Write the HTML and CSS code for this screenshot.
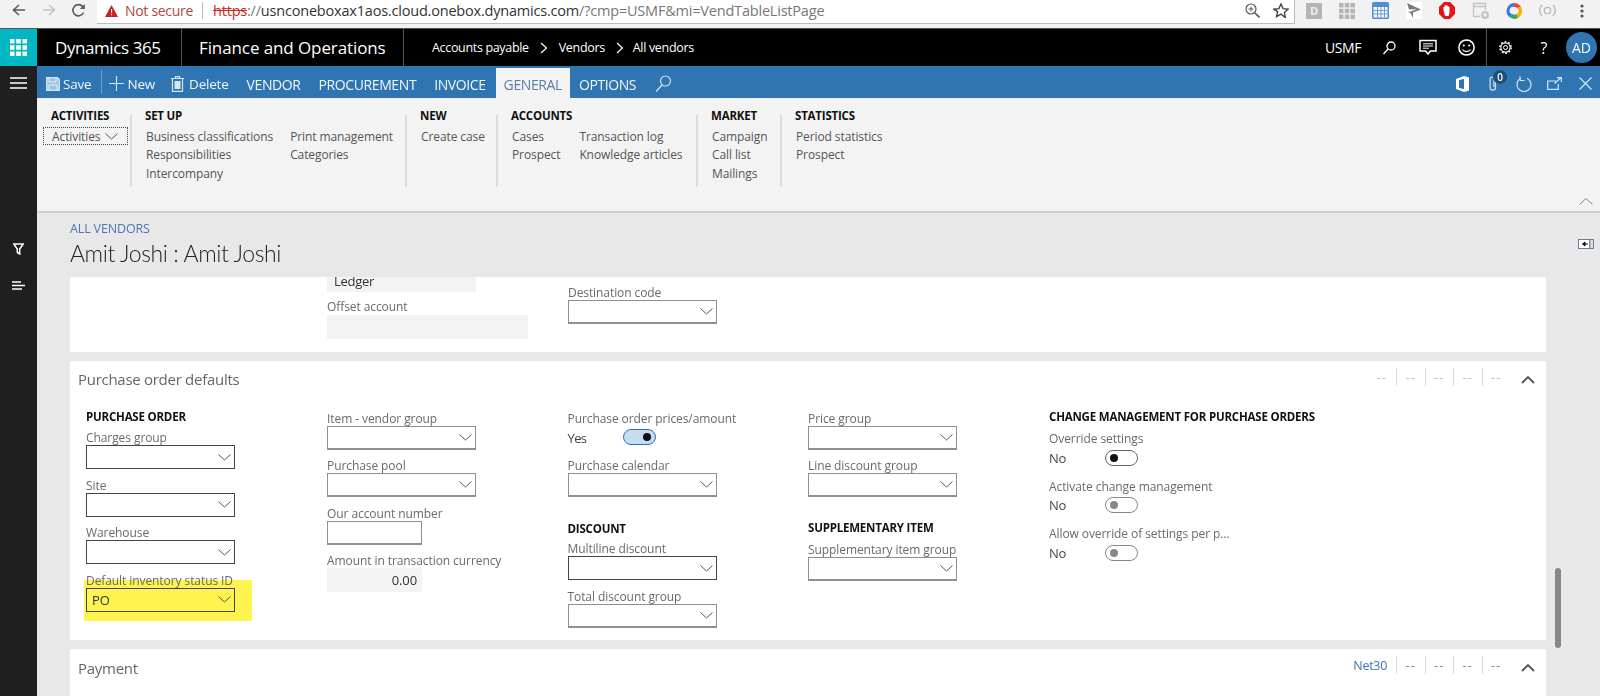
FILE: index.html
```
<!DOCTYPE html>
<html lang="en">
<head>
<meta charset="utf-8">
<title>All vendors</title>
<link rel="stylesheet" href="styles.css">
</head>
<body>
<div class="browser">
  <div class="nav-btns">
    <svg class="ic bk" width="14" height="14" viewBox="0 0 14 14"><path d="M13 7H2M7 2L1.5 7 7 12" fill="none" stroke="#5a5a5a" stroke-width="1.6"/></svg>
    <svg class="ic fw" width="14" height="14" viewBox="0 0 14 14"><path d="M1 7h11M7 2l5.500 5L7 12" fill="none" stroke="#c4c4c4" stroke-width="1.6"/></svg>
    <svg class="ic rl" width="15" height="15" viewBox="0 0 15 15"><path d="M12.600 9.500A5.600 5.600 0 1 1 11.600 3.400L13 5" fill="none" stroke="#5a5a5a" stroke-width="1.6"/><path d="M13.800 1v5h-5z" fill="#5a5a5a"/></svg>
  </div>
  <div class="urlbox">
    <svg width="13" height="12" viewBox="0 0 13 12"><path d="M6.500 0L13 12H0z" fill="#c5221f"/><path d="M6 4h1.100v4H6zM6 9h1.100v1.200H6z" fill="#fff"/></svg>
    <span class="notsecure">Not secure</span>
    <i class="urlsep"></i>
    <span class="url"><s class="https">https</s><span class="dim">://</span>usnconeboxax1aos.cloud.onebox.dynamics.com<span class="dim">/?cmp=USMF&amp;mi=VendTableListPage</span></span>
    <span class="grow"></span>
    <svg width="15" height="15" viewBox="0 0 15 15"><circle cx="6" cy="6" r="5" fill="none" stroke="#555" stroke-width="1.200"/><path d="M9.700 9.700L14.500 14.500" stroke="#555" stroke-width="1.600"/><path d="M3.500 6h5M6 3.500v5" stroke="#555"/></svg>
    <svg class="star" width="16" height="15" viewBox="0 0 16 15"><path d="M8 1l2.100 4.600 5 .6-3.700 3.400 1 5L8 11.200l-4.400 2.400 1-5L.9 6.200l5-.6z" fill="none" stroke="#444" stroke-width="1.400"/></svg>
  </div>
  <div class="exts">
    <span class="ext-d">D</span>
    <svg width="16" height="16" viewBox="0 0 16 16"><path d="M0 0h4.500v4.500H0zM5.700 0h4.500v4.500H5.700zM11.400 0H16v4.500h-4.600zM0 5.700h4.500v4.500H0zM5.700 5.700h4.500v4.500H5.700zM11.400 5.700H16v4.500h-4.600zM0 11.400h4.500V16H0zM5.700 11.400h4.500V16H5.700zM11.400 11.400H16V16h-4.600z" fill="#b5b5b5"/></svg>
    <svg width="17" height="17" viewBox="0 0 17 17"><rect width="17" height="17" rx="1.500" fill="#4f8fd8"/><rect x="1.500" y="5" width="14" height="10.500" fill="#f4f7fb"/><path d="M1.500 8.500h14M1.500 12h14M5.500 5v10.500M9 5v10.500M12.500 5v10.500" stroke="#6d9bd2"/></svg>
    <svg width="16" height="17" viewBox="0 0 16 17"><rect width="16" height="17" fill="#fff"/><path d="M1 1l14 6.500-8 3V16L4.500 11 1 9.500l3 .2L11 7 3 7.500z" fill="#7a7a7a"/></svg>
    <svg width="16" height="17" viewBox="0 0 16 17"><path d="M5 0h6l5 5v7l-5 5H5l-5-5V5z" fill="#e0161b"/><path d="M4.500 8V5h1V3.500h1V3h1v.5h1V4h1v1h1v6l-1 3H6z" fill="#fff"/></svg>
    <svg width="17" height="17" viewBox="0 0 17 17"><path d="M13.500 8V1.500h-12v13H8M1.500 4.500h12" fill="none" stroke="#c4c4c4" stroke-width="1.300"/><circle cx="13" cy="13" r="4" fill="#c4c4c4"/><path d="M13 11v4M11 13h4" stroke="#fff"/></svg>
    <svg width="16" height="16" viewBox="0 0 16 16"><path d="M8 0a8 8 0 0 1 7 4l-4 1A3.500 3.500 0 0 0 8 4z" fill="#e8453c"/><path d="M15 4a8 8 0 0 1-3 11l-1.500-4a3.500 3.500 0 0 0 .5-6z" fill="#f5b400"/><path d="M12 15a8 8 0 0 1-8-.5L6.500 11a3.500 3.500 0 0 0 4 0z" fill="#34a853"/><path d="M4 14.500A8 8 0 0 1 8 0v4a3.500 3.500 0 0 0-1.500 7z" fill="#3b78e7"/></svg>
    <svg width="17" height="13" viewBox="0 0 17 13"><circle cx="8.500" cy="6.500" r="3.200" fill="none" stroke="#bbb" stroke-width="1.300"/><path d="M3 1C0 4.500 0 8.500 3 12M14 1c3 3.500 3 7.500 0 11" fill="none" stroke="#bbb" stroke-width="1.300"/></svg>
    <svg class="dots" width="4" height="14" viewBox="0 0 4 14"><circle cx="2" cy="2" r="1.600" fill="#555"/><circle cx="2" cy="7" r="1.600" fill="#555"/><circle cx="2" cy="12" r="1.600" fill="#555"/></svg>
  </div>
</div>

<header class="topbar">
  <div class="waffle">
    <svg width="17" height="17" viewBox="0 0 17 17"><path d="M0 0h4.500v4.500H0zM6.200 0h4.600v4.500H6.200zM12.500 0H17v4.500h-4.500zM0 6.200h4.500v4.600H0zM6.200 6.200h4.600v4.600H6.200zM12.500 6.200H17v4.600h-4.500zM0 12.500h4.500V17H0zM6.200 12.500h4.600V17H6.200zM12.500 12.500H17V17h-4.500z" fill="#fff"/></svg>
  </div>
  <div class="brand d365">Dynamics 365</div>
  <div class="brand fno">Finance and Operations</div>
  <nav class="crumbs">
    <span>Accounts payable</span>
    <svg width="8" height="12" viewBox="0 0 8 12"><path d="M1 1l5.500 5L1 11" fill="none" stroke="#fff" stroke-width="1.200"/></svg>
    <span>Vendors</span>
    <svg width="8" height="12" viewBox="0 0 8 12"><path d="M1 1l5.500 5L1 11" fill="none" stroke="#fff" stroke-width="1.200"/></svg>
    <span>All vendors</span>
  </nav>
  <span class="grow"></span>
  <span class="company">USMF</span>
  <svg class="t-search" width="13" height="14" viewBox="0 0 13 14"><circle cx="8" cy="5" r="4" fill="none" stroke="#fff" stroke-width="1.300"/><path d="M5 8l-4.500 5" stroke="#fff" stroke-width="1.400"/></svg>
  <svg class="t-msg" width="18" height="17" viewBox="0 0 18 17"><path d="M1 1.500h16v10.500h-5.500L9 15l-2.500-3H1z" fill="none" stroke="#fff" stroke-width="1.500"/><path d="M4 4.800h10M4 7h10M4 9.200h6" stroke="#fff"/></svg>
  <svg class="t-smile" width="17" height="17" viewBox="0 0 17 17"><circle cx="8.500" cy="8.500" r="7.600" fill="none" stroke="#fff" stroke-width="1.500"/><circle cx="5.800" cy="6.500" r="1.100" fill="#fff"/><circle cx="11.200" cy="6.500" r="1.100" fill="#fff"/><path d="M4.500 10.500c2 2.700 6 2.700 8 0" fill="none" stroke="#fff" stroke-width="1.200"/></svg>
  <i class="t-sep"></i>
  <svg class="t-gear" width="13" height="13" viewBox="0 0 13 13"><circle cx="6.500" cy="6.500" r="2" fill="none" stroke="#fff"/><circle cx="6.500" cy="6.500" r="4.600" fill="none" stroke="#fff" stroke-width="1.100"/><circle cx="6.500" cy="6.500" r="5.700" fill="none" stroke="#fff" stroke-width="1.400" stroke-dasharray="1.800 1.800"/></svg>
  <span class="t-help">?</span>
  <span class="avatar">AD</span>
</header>

<div class="main">
  <aside class="rail">
    <svg class="r-menu" width="17" height="12" viewBox="0 0 17 12"><path d="M0 1h17M0 6h17M0 11h17" stroke="#fff" stroke-width="1.500"/></svg>
    <svg class="r-filter" width="11" height="12" viewBox="0 0 11 12"><path d="M.8 1h9.400L6.700 6v5L4.300 9.500V6z" fill="none" stroke="#fff" stroke-width="1.500"/></svg>
    <svg class="r-list" width="13" height="9" viewBox="0 0 13 9"><path d="M0 1h9M0 4.500h13M0 8h10" stroke="#fff" stroke-width="1.400"/></svg>
  </aside>

  <div class="work">
    <div class="toolbar">
      <svg class="b-save" width="14" height="14" viewBox="0 0 14 14"><path d="M.7.7h10.800l1.800 1.800v10.800H.7z" fill="#9cc3e4" stroke="#d7e6f3" stroke-width="1.300"/><path d="M3 1v4h7V1M3 13V8h8v5" fill="none" stroke="#e4eff8"/></svg>
      <span class="b-txt save">Save</span>
      <i class="b-sep"></i>
      <svg class="b-plus" width="15" height="15" viewBox="0 0 15 15"><path d="M0 7.500h15M7.500 0v15" stroke="#d7e6f3" stroke-width="1.100"/></svg>
      <span class="b-txt new">New</span>
      <svg class="b-trash" width="13" height="16" viewBox="0 0 13 16"><path d="M0 2.500h13M4.500 2.500V.7h4v1.800M1.500 2.500h10V15.300h-10z" fill="none" stroke="#d7e6f3" stroke-width="1.200"/><path d="M3.500 5h6v8h-6z" fill="#d7e6f3"/></svg>
      <span class="b-txt del">Delete</span>
      <span class="tab tab-vendor">VENDOR</span>
      <span class="tab">PROCUREMENT</span>
      <span class="tab">INVOICE</span>
      <span class="tab active">GENERAL</span>
      <span class="tab">OPTIONS</span>
      <svg class="b-find" width="17" height="17" viewBox="0 0 17 17"><circle cx="10.500" cy="6" r="5" fill="none" stroke="#d7e6f3" stroke-width="1.100"/><path d="M7 10l-6 6.500" stroke="#d7e6f3" stroke-width="1.200"/></svg>
      <span class="grow"></span>
      <svg class="b-office" width="13" height="16" viewBox="0 0 13 16"><path d="M8 0L0 3v10l8 3 5-1.500v-13z" fill="#fff"/><path d="M3 4l5-1v10l-5-1z" fill="#2e75b2"/></svg>
      <span class="clip">
        <svg width="8" height="15" viewBox="0 0 8 15"><path d="M6.500 3.500v8a2.700 2.700 0 0 1-5.400 0V3a1.900 1.900 0 0 1 3.800 0v8" fill="none" stroke="#cfe1f0" stroke-width="1.200"/></svg>
        <span class="badge">0</span>
      </span>
      <svg class="b-refresh" width="16" height="16" viewBox="0 0 16 16"><path d="M5 2.200a7 7 0 1 0 6 0" fill="none" stroke="#d7e6f3" stroke-width="1.200"/><path d="M4 0v4.500h4.500" fill="none" stroke="#d7e6f3"/></svg>
      <svg class="b-open" width="15" height="13" viewBox="0 0 15 13"><path d="M9 4H.7v8.300h10.600V7M7.500 6.500L14 .7M10 .6h4.400V5" fill="none" stroke="#d7e6f3" stroke-width="1.200"/></svg>
      <svg class="b-close" width="13" height="13" viewBox="0 0 13 13"><path d="M.5.5l12 12M12.500.5l-12 12" stroke="#d7e6f3" stroke-width="1.200"/></svg>
    </div>

    <div class="ribbon">
      <section class="rg rg-act">
        <h4>ACTIVITIES</h4>
        <div class="activities"><span>Activities</span>
          <svg width="13" height="7" viewBox="0 0 13 7"><path d="M.5.500l6 5.500 6-5.500" fill="none" stroke="#555"/></svg>
        </div>
      </section>
      <section class="rg rg-setup">
        <h4>SET UP</h4>
        <div class="rcols">
          <ul><li>Business classifications</li><li>Responsibilities</li><li>Intercompany</li></ul>
          <ul><li>Print management</li><li>Categories</li></ul>
        </div>
      </section>
      <section class="rg rg-new">
        <h4>NEW</h4>
        <div class="rcols"><ul><li>Create case</li></ul></div>
      </section>
      <section class="rg rg-acc">
        <h4>ACCOUNTS</h4>
        <div class="rcols">
          <ul><li>Cases</li><li>Prospect</li></ul>
          <ul><li>Transaction log</li><li>Knowledge articles</li></ul>
        </div>
      </section>
      <section class="rg rg-mkt">
        <h4>MARKET</h4>
        <div class="rcols"><ul><li>Campaign</li><li>Call list</li><li>Mailings</li></ul></div>
      </section>
      <section class="rg rg-stat">
        <h4>STATISTICS</h4>
        <div class="rcols"><ul><li>Period statistics</li><li>Prospect</li></ul></div>
      </section>
      <svg class="rib-collapse" width="14" height="8" viewBox="0 0 14 8"><path d="M.5 7.500l6.500-6 6.500 6" fill="none" stroke="#888"/></svg>
    </div>

    <div class="page">
      <div class="page-head">
        <div class="crumb-up">ALL VENDORS</div>
        <h1>Amit Joshi : Amit Joshi</h1>
      </div>
      <svg class="pane-toggle" width="16" height="10" viewBox="0 0 16 10"><rect x=".5" y=".5" width="15" height="9" fill="#fff" stroke="#6a7f9a"/><path d="M12 1v8" stroke="#222"/><path d="M12.500 1h2.500v8h-2.500z" fill="#ddd"/><path d="M5 5h5M7 3L4.500 5 7 7z" stroke="#111" fill="#111"/></svg>

      <div class="panels">
        <section class="panel p-top">
          <div class="p-top-col1">
            <div class="ledger"><span>Ledger</span></div>
            <label class="lbl offset-lbl">Offset account</label>
            <div class="ro-wide"></div>
          </div>
          <div class="p-top-col2">
            <label class="lbl">Destination code</label>
            <div class="dd"><svg class="chev" viewBox="0 0 13 7"><path d="M.5.500l6 5.500 6-5.500"/></svg></div>
          </div>
        </section>

        <section class="panel p-po">
          <header class="p-head">
            <h2>Purchase order defaults</h2>
            <div class="summary">
              <span class="sv">--</span><span class="sv">--</span><span class="sv">--</span><span class="sv">--</span><span class="sv">--</span>
            </div>
            <svg class="collapse" width="14" height="9" viewBox="0 0 14 9"><path d="M1 8l6-6 6 6" fill="none" stroke="#555" stroke-width="1.800"/></svg>
          </header>
          <div class="form">
            <div class="col c-first">
              <h3>PURCHASE ORDER</h3>
              <div class="f"><label class="lbl">Charges group</label><div class="dd dark"><svg class="chev" viewBox="0 0 13 7"><path d="M.5.500l6 5.500 6-5.500"/></svg></div></div>
              <div class="f"><label class="lbl">Site</label><div class="dd dark"><svg class="chev" viewBox="0 0 13 7"><path d="M.5.500l6 5.500 6-5.500"/></svg></div></div>
              <div class="f"><label class="lbl">Warehouse</label><div class="dd dark"><svg class="chev" viewBox="0 0 13 7"><path d="M.5.500l6 5.500 6-5.500"/></svg></div></div>
              <div class="f hl">
                <span class="marker"></span>
                <label class="lbl">Default inventory status ID</label>
                <div class="dd dark"><span class="ddv">PO</span><svg class="chev" viewBox="0 0 13 7"><path d="M.5.500l6 5.500 6-5.500"/></svg></div>
              </div>
            </div>
            <div class="col c-offset">
              <div class="f"><label class="lbl">Item - vendor group</label><div class="dd"><svg class="chev" viewBox="0 0 13 7"><path d="M.5.500l6 5.500 6-5.500"/></svg></div></div>
              <div class="f"><label class="lbl">Purchase pool</label><div class="dd"><svg class="chev" viewBox="0 0 13 7"><path d="M.5.500l6 5.500 6-5.500"/></svg></div></div>
              <div class="f"><label class="lbl">Our account number</label><div class="txt"></div></div>
              <div class="f"><label class="lbl">Amount in transaction currency</label><div class="ro-num">0.00</div></div>
            </div>
            <div class="col c-offset">
              <div class="f-t"><label class="lbl">Purchase order prices/amount</label><div class="tg-row"><span class="tv">Yes</span><span class="tg on"></span></div></div>
              <div class="f"><label class="lbl">Purchase calendar</label><div class="dd"><svg class="chev" viewBox="0 0 13 7"><path d="M.5.500l6 5.500 6-5.500"/></svg></div></div>
              <h3 class="h-mid h-disc">DISCOUNT</h3>
              <div class="f"><label class="lbl">Multiline discount</label><div class="dd dark"><svg class="chev" viewBox="0 0 13 7"><path d="M.5.500l6 5.500 6-5.500"/></svg></div></div>
              <div class="f"><label class="lbl">Total discount group</label><div class="dd"><svg class="chev" viewBox="0 0 13 7"><path d="M.5.500l6 5.500 6-5.500"/></svg></div></div>
            </div>
            <div class="col c-offset">
              <div class="f"><label class="lbl">Price group</label><div class="dd"><svg class="chev" viewBox="0 0 13 7"><path d="M.5.500l6 5.500 6-5.500"/></svg></div></div>
              <div class="f"><label class="lbl">Line discount group</label><div class="dd"><svg class="chev" viewBox="0 0 13 7"><path d="M.5.500l6 5.500 6-5.500"/></svg></div></div>
              <h3 class="h-mid">SUPPLEMENTARY ITEM</h3>
              <div class="f"><label class="lbl">Supplementary item group</label><div class="dd"><svg class="chev" viewBox="0 0 13 7"><path d="M.5.500l6 5.500 6-5.500"/></svg></div></div>
            </div>
            <div class="col">
              <h3>CHANGE MANAGEMENT FOR PURCHASE ORDERS</h3>
              <div class="f-n"><label class="lbl">Override settings</label><div class="tg-row no"><span class="tv">No</span><span class="tg off"></span></div></div>
              <div class="f-n"><label class="lbl">Activate change management</label><div class="tg-row no"><span class="tv">No</span><span class="tg off dis"></span></div></div>
              <div class="f-n"><label class="lbl">Allow override of settings per p...</label><div class="tg-row no"><span class="tv">No</span><span class="tg off dis"></span></div></div>
            </div>
          </div>
        </section>

        <section class="panel p-pay">
          <header class="p-head">
            <h2>Payment</h2>
            <div class="summary">
              <span class="sv link">Net30</span><span class="sv">--</span><span class="sv">--</span><span class="sv">--</span><span class="sv">--</span>
            </div>
            <svg class="collapse" width="14" height="9" viewBox="0 0 14 9"><path d="M1 8l6-6 6 6" fill="none" stroke="#555" stroke-width="1.800"/></svg>
          </header>
        </section>
      </div>
      <span class="scrollthumb"></span>
    </div>
  </div>
</div>
</body>
</html>
```
FILE: styles.css
```
* { box-sizing: border-box; }
html, body { margin: 0; height: 100%; overflow: hidden; }
body {
  width: 1600px; height: 696px;
  font-family: "Open Sans", "Noto Sans", sans-serif;
  font-size: 12px; color: #333;
  display: flex; flex-direction: column;
  background: #e8e8e8;
  filter: blur(.35px);
}
.grow { flex: 1; }
ul { list-style: none; margin: 0; padding: 0; }
h1, h2, h3, h4 { margin: 0; font-weight: normal; }

/* browser chrome */
.browser { height: 29px; flex: none; background: #f2f2f2; border-bottom: 1px solid #555; display: flex; }
.nav-btns { width: 97px; display: flex; align-items: flex-start; padding: 3px 0 0 12px; }
.nav-btns .fw { margin-left: 16px; }
.nav-btns .rl { margin-left: 15px; }
.urlbox { width: 1198px; height: 24px; background: #fff; border: 1px solid #bbb; border-top: 0; border-left: 0; display: flex; align-items: center; padding: 0 5px 2px 8px; }
.notsecure { margin-left: 7px; color: #b5483f; font-size: 14px; letter-spacing: -.3px; }
.urlsep { width: 1px; height: 17px; background: #bbb; margin: 0 10px 0 9px; }
.url { font-size: 14.5px; color: #333; letter-spacing: -.2px; white-space: nowrap; }
.https { color: #cc2a22; }
.dim { color: #777; }
.star { margin-left: 13px; }
.exts { flex: 1; display: flex; align-items: center; padding: 0 0 7px 11px; gap: 17px; }
.ext-d { width: 16px; height: 16px; background: #b5b5b5; color: #eee; font-size: 11px; font-weight: 700; display: flex; align-items: center; justify-content: center; }
.dots { margin-left: 7px; }

/* top bar */
.topbar { height: 37px; flex: none; background: #000; color: #fff; display: flex; align-items: center; }
.waffle { width: 37px; height: 37px; background: #00b7c3; display: flex; align-items: center; justify-content: center; }
.brand { height: 37px; display: flex; align-items: center; font-size: 17px; letter-spacing: -.42px; white-space: nowrap; border-right: 1px solid #555; }
.d365 { width: 145px; padding-left: 18px; }
.fno { width: 222px; padding-left: 17px; letter-spacing: -.1px; }
.crumbs { display: flex; align-items: center; padding-left: 28px; font-size: 12.5px; letter-spacing: -.33px; white-space: nowrap; }
.crumbs svg { margin: 0 11px; }
.crumbs svg:last-of-type { margin: 0 9px 0 11px; }
.company { font-size: 14px; letter-spacing: -.4px; margin-right: 22px; }
.t-search { margin-right: 23px; }
.t-msg { margin-right: 21px; }
.t-smile { margin-right: 11px; }
.t-sep { width: 1px; height: 37px; background: #555; }
.t-gear { margin-left: 12px; margin-right: 27px; }
.t-help { font-size: 16px; margin-right: 17px; width: 10px; text-align: center; }
.avatar { width: 31px; height: 31px; border-radius: 50%; background: #2e75b2; display: flex; align-items: center; justify-content: center; font-size: 14px; margin-right: 3px; }

/* body frame */
.main { flex: 1; display: flex; min-height: 0; }
.rail { width: 37px; flex: none; background: #1f1f1f; display: flex; flex-direction: column; align-items: center; }
.r-menu { margin-top: 11px; }
.r-filter { margin-top: 154px; }
.r-list { margin-top: 26px; }
.work { flex: 1; display: flex; flex-direction: column; min-width: 0; }

/* toolbar */
.toolbar { height: 32px; flex: none; background: #2e75b2; color: #f2f6fa; display: flex; align-items: center; white-space: nowrap; position: relative; padding-top: 3px; }
.b-save { margin-left: 9px; }
.b-txt { font-size: 13.5px; letter-spacing: -.2px; }
.save { margin-left: 3px; }
.b-sep { width: 1px; height: 24px; background: #6b9ec9; margin: -3px 0 0 10px; }
.b-plus { margin-left: 7px; }
.new { margin-left: 3px; }
.b-trash { margin-left: 16px; }
.del { margin-left: 5px; }
.tab { font-size: 14px; letter-spacing: -.4px; padding: 3px 9px 0; height: 30px; display: flex; align-items: center; align-self: flex-end; }
.tab-vendor { margin-left: 9px; }
.tab.active { background: #f3f3f3; color: #5b7ea8; padding: 3px 8px 0; margin-left: 1px; }
.b-find { margin-left: 10px; }
.b-office { margin-right: 20px; }
.clip { display: flex; align-items: center; width: 27px; position: relative; }
.badge { position: absolute; left: 4px; top: -6px; width: 14px; height: 14px; border-radius: 50%; background: #1d4f74; color: #fff; font-size: 10px; font-weight: 600; display: flex; align-items: center; justify-content: center; }
.b-refresh { margin-right: 15px; }
.b-open { margin-right: 17px; }
.b-close { margin-right: 8px; }

/* ribbon */
.ribbon { height: 115px; flex: none; background: #f3f3f3; border-bottom: 2px solid #cfcfcf; display: flex; position: relative; color: #555; }
.rg { padding-top: 9px; height: 89px; }
.rg + .rg { border-left: 2px solid #dcdcdc; margin-top: 17px; padding-top: 0; height: 72px; }
.rg h4 { font-size: 11.5px; font-weight: 700; color: #111; line-height: 18px; letter-spacing: -.2px; white-space: nowrap; }
.rg + .rg h4 { margin-top: -8px; }
.rg-act { width: 93px; padding-left: 14px; }
.rg-setup { width: 275px; padding-left: 13px; }
.rg-new { width: 91px; padding-left: 13px; }
.rg-acc { width: 200px; padding-left: 13px; }
.rg-mkt { width: 84px; padding-left: 13px; }
.rg-stat { padding-left: 13px; }
.rcols { display: flex; gap: 17px; margin-top: 3px; padding-left: 1px; }
.rg-acc .rcols { gap: 19px; }
.rcols li { font-size: 12px; line-height: 18.3px; letter-spacing: -.1px; white-space: nowrap; }
.activities { margin: 2px 0 0 -8px; width: 85px; height: 18px; border: 1px dotted #444; display: flex; align-items: center; font-size: 12px; letter-spacing: -.1px; padding-left: 8px; gap: 5px; }
.rib-collapse { position: absolute; right: 7px; bottom: 6px; }

/* page */
.page { flex: 1; display: flex; flex-direction: column; padding-left: 33px; min-height: 0; position: relative; overflow: hidden; }
.page-head { height: 64px; flex: none; padding-top: 8px; }
.crumb-up { font-size: 12.5px; color: #4f76b4; line-height: 16px; letter-spacing: -.15px; }
h1 { font-family: "Lato", "Open Sans", sans-serif; font-size: 23px; font-weight: 300; color: #222; line-height: 32px; letter-spacing: -.4px; white-space: nowrap; }
.pane-toggle { position: absolute; left: 1541px; top: 26px; }
.panels { width: 1476px; flex: 1; display: flex; flex-direction: column; gap: 9px; min-height: 0; }
.panel { background: #fff; flex: none; }
.p-top { height: 75px; display: flex; overflow: hidden; }
.p-top-col1 { margin-left: 257px; width: 241px; }
.ledger { width: 149px; height: 15px; background: #f3f3f3; padding-left: 7px; font-size: 13px; color: #333; line-height: 15px; overflow: hidden; letter-spacing: -.3px; display: flex; align-items: flex-end; }
.ledger span { display: block; margin-bottom: 3px; }
.ro-wide { width: 201px; height: 24px; background: #f3f3f3; }
.p-top-col2 { padding-top: 6px; }
.lbl { display: block; height: 17px; line-height: 19px; font-size: 12px; color: #6a6a6a; letter-spacing: -.08px; white-space: nowrap; }
.offset-lbl { margin-top: 8px; height: 15px; line-height: 14px; }
.dd, .txt { width: 149px; height: 24px; border: 1px solid #8f8f8f; border-width: 1px 1px 2px 1px; background: #fff; display: flex; align-items: center; }
.dd.dark { border-color: #444; border-width: 1px; }
.chev { width: 13px; height: 7px; margin-left: auto; margin-right: 3px; fill: none; stroke: #555; stroke-width: 1; }
.txt { width: 95px; }
.ro-num { width: 95px; height: 24px; background: #f3f3f3; text-align: right; padding-right: 5px; line-height: 24px; font-size: 13px; color: #333; letter-spacing: -.1px; }
.p-po { height: 279px; overflow: hidden; }
.p-head { height: 47px; display: flex; align-items: flex-start; padding: 8px 0 0 8px; position: relative; }
h2 { font-size: 15px; color: #666; line-height: 20px; letter-spacing: -.28px; white-space: nowrap; }
.summary { position: absolute; right: 36px; top: 7px; display: flex; }
.sv { width: 28.5px; height: 18px; line-height: 19px; text-align: center; color: #bdbdbd; font-size: 13px; letter-spacing: 1px; border-left: 1px solid #dcdcdc; }
.sv:first-child { border-left: 0; }
.p-pay .p-head { padding-top: 9px; }
.p-pay .sv { color: #888; }
.p-pay .sv.link { width: auto; color: #3f73b8; padding-right: 9px; font-size: 12.5px; letter-spacing: -.3px; }
.collapse { position: absolute; right: 11px; top: 14px; }
.form { display: grid; grid-template-columns: 241px 240.5px 240.5px 241px 1fr; padding-left: 16px; }
h3 { font-size: 11.5px; font-weight: 700; color: #111; line-height: 18px; height: 20px; letter-spacing: -.2px; white-space: nowrap; }
.c-offset { padding-top: 1px; }
.f { height: 47.33px; position: relative; }
.c-first .f { height: 47.5px; }
.h-mid { margin-top: 15px; height: 21px; }
.h-disc { margin-top: 17px; height: 19px; }
.f-t { height: 47px; }
.tg-row { display: flex; align-items: center; height: 19px; padding-top: 3px; font-size: 13px; color: #444; }
.tv { width: 55px; letter-spacing: -.6px; line-height: 17px; padding-top: 2px; }
.tg { width: 33px; height: 16px; border-radius: 8px; border: 1px solid #666; background: #fff; display: flex; align-items: center; padding: 0 4px; }
.tg::after { content: ""; width: 8px; height: 8px; border-radius: 50%; background: #111; }
.tg.on { background: #c5dcf2; border-color: #2e75b2; justify-content: flex-end; }
.tg.dis { border-color: #888; }
.tg.dis::after { background: #888; }
.f-n { height: 47.5px; padding-top: 1px; }
.tg-row.no { padding-top: 4px; }
.tg-row.no .tv { width: 56px; letter-spacing: -.3px; padding-top: 1px; }
.hl .marker { position: absolute; left: -2px; top: 9px; width: 168px; height: 41px; background: #fff34f; }
.hl .lbl, .hl .dd { position: relative; }
.hl .dd { background: transparent; }
.ddv { padding-left: 5px; font-size: 13px; color: #333; }
.p-pay { flex: 1; }
.scrollthumb { position: absolute; left: 1518px; top: 355px; width: 6px; height: 80px; background: #888; border-radius: 3px; }
```
